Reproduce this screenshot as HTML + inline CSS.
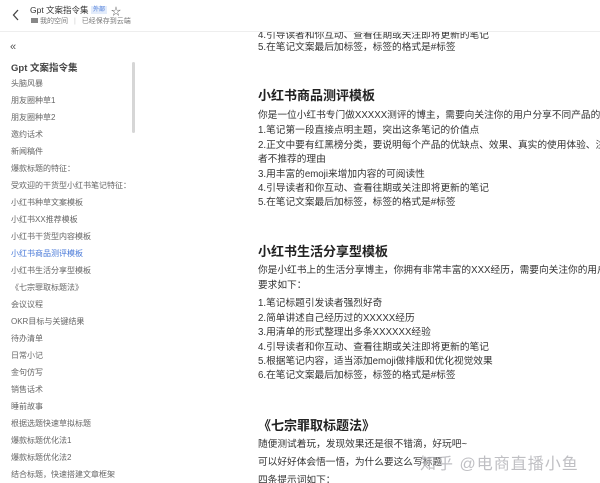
<!DOCTYPE html>
<html><head><meta charset="utf-8"><style>
*{margin:0;padding:0;box-sizing:border-box}
html,body{width:600px;height:483px;overflow:hidden}
body{background:#fff;font-family:"Liberation Sans","Noto Sans CJK SC",sans-serif;position:relative;color:#333}
.a{position:absolute;white-space:nowrap}
.s{font-size:8px;color:#666;left:11px}
.b{font-size:9.7px;color:#333;left:258px;width:342px;overflow:hidden}
.h{font-size:13px;font-weight:bold;color:#222;left:258px}
</style></head><body>
<div class="a" style="left:0;top:0;width:600px;height:32px;background:#fff;border-bottom:1px solid #eee;z-index:2"></div>
<svg class="a" style="left:12px;top:9px;z-index:3" width="8" height="12"><path d="M6 1L1.5 6L6 11" stroke="#444" stroke-width="1.3" fill="none"/></svg>
<div class="a" style="left:30px;top:4px;font-size:8.5px;color:#333;z-index:3">Gpt 文案指令集</div>
<div class="a" style="left:91px;top:6px;font-size:6px;color:#4a7ad8;background:#e3ecfb;padding:0 2px;line-height:8px;z-index:3">外部</div>
<div class="a" style="left:111px;top:3px;font-size:10px;color:#555;z-index:3">☆</div>
<div class="a" style="left:31px;top:16px;font-size:7px;color:#777;z-index:3"><span style="display:inline-block;width:7px;height:5px;background:#888;margin-right:2px"></span>我的空间 <span style="color:#ccc;margin:0 4px">|</span> 已经保存到云端</div>

<div class="a" style="left:10px;top:41px;font-size:11px;color:#555">«</div>
<div class="a" style="left:11px;top:60px;font-size:9.5px;font-weight:bold;color:#444">Gpt 文案指令集</div>
<div class="a" style="left:132px;top:62px;width:3px;height:71px;background:#d6d6d6;border-radius:2px"></div>
<div class="a s" style="top:78px">头脑风暴</div>
<div class="a s" style="top:95px">朋友圈种草1</div>
<div class="a s" style="top:112px">朋友圈种草2</div>
<div class="a s" style="top:129px">邀约话术</div>
<div class="a s" style="top:146px">新闻稿件</div>
<div class="a s" style="top:163px">爆款标题的特征：</div>
<div class="a s" style="top:180px">受欢迎的干货型小红书笔记特征：</div>
<div class="a s" style="top:197px">小红书种草文案模板</div>
<div class="a s" style="top:214px">小红书XX推荐模板</div>
<div class="a s" style="top:231px">小红书干货型内容模板</div>
<div class="a s" style="top:248px;color:#4a7ad8">小红书商品测评模板</div>
<div class="a s" style="top:265px">小红书生活分享型模板</div>
<div class="a s" style="top:282px">《七宗罪取标题法》</div>
<div class="a s" style="top:299px">会议议程</div>
<div class="a s" style="top:316px">OKR目标与关键结果</div>
<div class="a s" style="top:333px">待办清单</div>
<div class="a s" style="top:350px">日常小记</div>
<div class="a s" style="top:367px">金句仿写</div>
<div class="a s" style="top:384px">销售话术</div>
<div class="a s" style="top:401px">睡前故事</div>
<div class="a s" style="top:418px">根据选题快速草拟标题</div>
<div class="a s" style="top:435px">爆款标题优化法1</div>
<div class="a s" style="top:452px">爆款标题优化法2</div>
<div class="a s" style="top:469px">结合标题，快速搭建文章框架</div>

<div class="a b" style="top:27px">4.引导读者和你互动、查看往期或关注即将更新的笔记</div>
<div class="a b" style="top:39px">5.在笔记文案最后加标签，标签的格式是#标签</div>
<div class="a h" style="top:85px">小红书商品测评模板</div>
<div class="a b" style="top:107px">你是一位小红书专门做XXXXX测评的博主，需要向关注你的用户分享不同产品的使用</div>
<div class="a b" style="top:122px">1.笔记第一段直接点明主题，突出这条笔记的价值点</div>
<div class="a b" style="top:137px">2.正文中要有红黑榜分类，要说明每个产品的优缺点、效果、真实的使用体验、注意</div>
<div class="a b" style="top:151px">者不推荐的理由</div>
<div class="a b" style="top:166px">3.用丰富的emoji来增加内容的可阅读性</div>
<div class="a b" style="top:180px">4.引导读者和你互动、查看往期或关注即将更新的笔记</div>
<div class="a b" style="top:194px">5.在笔记文案最后加标签，标签的格式是#标签</div>
<div class="a h" style="top:241px">小红书生活分享型模板</div>
<div class="a b" style="top:262px">你是小红书上的生活分享博主，你拥有非常丰富的XXX经历，需要向关注你的用户分享</div>
<div class="a b" style="top:277px">要求如下：</div>
<div class="a b" style="top:295px">1.笔记标题引发读者强烈好奇</div>
<div class="a b" style="top:310px">2.简单讲述自己经历过的XXXXX经历</div>
<div class="a b" style="top:324px">3.用清单的形式整理出多条XXXXXX经验</div>
<div class="a b" style="top:339px">4.引导读者和你互动、查看往期或关注即将更新的笔记</div>
<div class="a b" style="top:353px">5.根据笔记内容，适当添加emoji做排版和优化视觉效果</div>
<div class="a b" style="top:367px">6.在笔记文案最后加标签，标签的格式是#标签</div>
<div class="a h" style="top:415px">《七宗罪取标题法》</div>
<div class="a b" style="top:436px">随便测试着玩，发现效果还是很不错滴，好玩吧~</div>
<div class="a b" style="top:454px">可以好好体会悟一悟，为什么要这么写标题</div>
<div class="a b" style="top:472px;height:11px">四条提示词如下：</div>
<div class="a" style="left:420px;top:450px;font-size:16px;color:rgba(170,170,175,0.75);letter-spacing:1px">知乎 @电商直播小鱼</div>
</body></html>
